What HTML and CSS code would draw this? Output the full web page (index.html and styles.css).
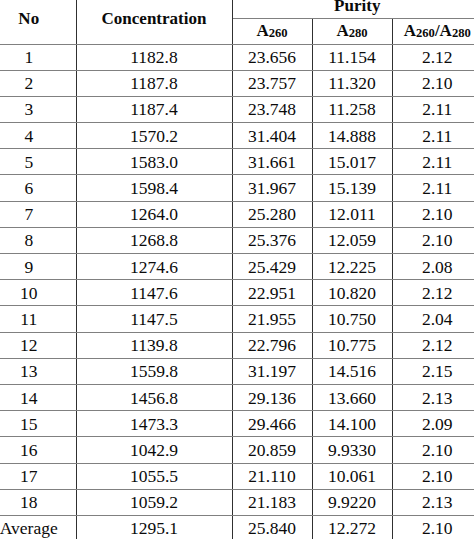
FILE: index.html
```html
<!DOCTYPE html>
<html>
<head>
<meta charset="utf-8">
<link rel="stylesheet" href="styles.css">
</head>
<body>
<div class="frame">
<table class="data">
  <colgroup>
    <col class="c-no"><col class="c-conc"><col class="c-a"><col class="c-b"><col class="c-r">
  </colgroup>
  <thead>
    <tr class="h1">
      <th rowspan="2" class="vl">No</th>
      <th rowspan="2" class="vl">Concentration</th>
      <th colspan="3" class="purity">Purity</th>
    </tr>
    <tr class="h2">
      <th class="vl">A<sub>260</sub></th>
      <th class="vl">A<sub>280</sub></th>
      <th>A<sub>260</sub>/A<sub>280</sub></th>
    </tr>
  </thead>
  <tbody>
    <tr><td>1</td><td>1182.8</td><td>23.656</td><td>11.154</td><td>2.12</td></tr>
    <tr><td>2</td><td>1187.8</td><td>23.757</td><td>11.320</td><td>2.10</td></tr>
    <tr><td>3</td><td>1187.4</td><td>23.748</td><td>11.258</td><td>2.11</td></tr>
    <tr><td>4</td><td>1570.2</td><td>31.404</td><td>14.888</td><td>2.11</td></tr>
    <tr><td>5</td><td>1583.0</td><td>31.661</td><td>15.017</td><td>2.11</td></tr>
    <tr><td>6</td><td>1598.4</td><td>31.967</td><td>15.139</td><td>2.11</td></tr>
    <tr><td>7</td><td>1264.0</td><td>25.280</td><td>12.011</td><td>2.10</td></tr>
    <tr><td>8</td><td>1268.8</td><td>25.376</td><td>12.059</td><td>2.10</td></tr>
    <tr><td>9</td><td>1274.6</td><td>25.429</td><td>12.225</td><td>2.08</td></tr>
    <tr><td>10</td><td>1147.6</td><td>22.951</td><td>10.820</td><td>2.12</td></tr>
    <tr><td>11</td><td>1147.5</td><td>21.955</td><td>10.750</td><td>2.04</td></tr>
    <tr><td>12</td><td>1139.8</td><td>22.796</td><td>10.775</td><td>2.12</td></tr>
    <tr><td>13</td><td>1559.8</td><td>31.197</td><td>14.516</td><td>2.15</td></tr>
    <tr><td>14</td><td>1456.8</td><td>29.136</td><td>13.660</td><td>2.13</td></tr>
    <tr><td>15</td><td>1473.3</td><td>29.466</td><td>14.100</td><td>2.09</td></tr>
    <tr><td>16</td><td>1042.9</td><td>20.859</td><td>9.9330</td><td>2.10</td></tr>
    <tr><td>17</td><td>1055.5</td><td>21.110</td><td>10.061</td><td>2.10</td></tr>
    <tr><td>18</td><td>1059.2</td><td>21.183</td><td>9.9220</td><td>2.13</td></tr>
    <tr><td>Average</td><td>1295.1</td><td>25.840</td><td>12.272</td><td>2.10</td></tr>
  </tbody>
</table>
</div>
</body>
</html>
```
FILE: styles.css
```css
html, body {
  margin: 0;
  padding: 0;
  background: #ffffff;
}
.frame {
  width: 474px;
  height: 539px;
  overflow: hidden;
}
.data {
  margin-left: -18px;
  margin-top: -6px;
  border-collapse: collapse;
  table-layout: fixed;
  width: 500px;
  font-family: "Liberation Serif", "Times New Roman", serif;
  font-size: 17px;
  color: #0a0a0a;
}
.c-no { width: 94px; }
.c-conc { width: 156px; }
.c-a { width: 80px; }
.c-b { width: 80px; }
.c-r { width: 90px; }
.data th, .data td {
  padding: 0;
  text-align: center;
  vertical-align: middle;
  line-height: 20px;
  border-bottom: 1px solid #808080;
}
.data td {
  font-size: 17.5px;
}
.data th {
  font-weight: bold;
}
.data td:not(:last-child), .data th.vl {
  border-right: 1px solid #303030;
}
.h1 { height: 24px; }
.h2 { height: 26px; }
.purity { border-bottom-color: #303030; }
.data tbody tr { height: 26.2px; }
.data sub {
  font-size: 0.74em;
  vertical-align: -0.08em;
  line-height: 0;
}
```
